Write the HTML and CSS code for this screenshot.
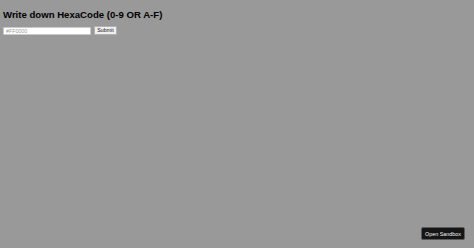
FILE: index.html
```html
<!DOCTYPE html>
<html lang="en">
<head>
<meta charset="utf-8">
<title>HexaCode</title>
<link rel="stylesheet" href="styles.css">
</head>
<body class="page">
  <h2 class="title">Write down HexaCode (0-9 OR A-F)</h2>
  <form class="hex-form">
    <input class="hex-input" type="text" placeholder="#FF0000">
    <button class="submit-btn" type="button">Submit</button>
  </form>
  <a class="sandbox-btn">Open Sandbox</a>
</body>
</html>
```
FILE: styles.css
```css
html {
  background: #999999;
}
.page {
  margin: 3px;
  font-family: "Liberation Sans", Arial, sans-serif;
  color: #000;
}
.title {
  margin: 6px 0 6px;
  font-size: 9.6px;
  line-height: 11px;
  font-weight: bold;
}
.hex-form {
  display: flex;
  align-items: center;
  gap: 3px;
}
.hex-input {
  box-sizing: border-box;
  width: 88px;
  height: 8px;
  margin: 0;
  padding: 0 2px;
  border: 1px solid #c9c9c9;
  border-radius: 1px;
  background: #fff;
  font-family: "Liberation Sans", Arial, sans-serif;
  font-size: 5.3px;
  outline: none;
}
.hex-input::placeholder {
  color: #9a9a9a;
}
.submit-btn {
  box-sizing: border-box;
  height: 9px;
  width: 23px;
  margin: 0;
  padding: 0;
  border: 1px solid #b0b0b0;
  border-radius: 1px;
  background: #efefef;
  color: #111;
  font-family: "Liberation Sans", Arial, sans-serif;
  font-size: 5.3px;
  line-height: 7px;
}
.sandbox-btn {
  position: fixed;
  right: 9px;
  bottom: 8px;
  box-sizing: border-box;
  width: 44px;
  height: 13px;
  display: flex;
  align-items: center;
  justify-content: center;
  background: #151515;
  border: 1px solid #5a5a5a;
  border-radius: 2px;
  color: #f2f2f2;
  font-size: 5.4px;
}
```
